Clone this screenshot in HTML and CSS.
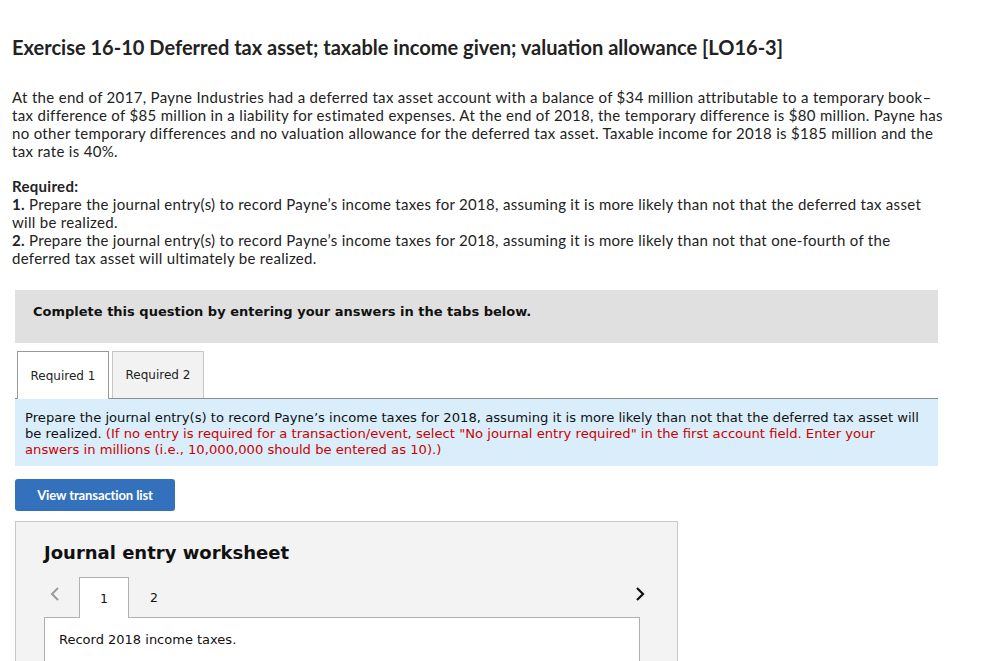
FILE: index.html
```html
<!DOCTYPE html>
<html>
<head>
<meta charset="utf-8">
<link rel="stylesheet" href="styles.css">
</head>
<body>
<div class="page">
  <h1 class="title">Exercise 16-10 Deferred tax asset; taxable income given; valuation allowance [LO16-3]</h1>
  <p class="intro">At the end of 2017, Payne Industries had a deferred tax asset account with a balance of $34 million attributable to a temporary book–<br>tax difference of $85 million in a liability for estimated expenses. At the end of 2018, the temporary difference is $80 million. Payne has no other temporary differences and no valuation allowance for the deferred tax asset. Taxable income for 2018 is $185 million and the tax rate is 40%.</p>
  <div class="required">
    <div class="req-head">Required:</div>
    <div><b>1.</b> Prepare the journal entry(s) to record Payne’s income taxes for 2018, assuming it is more likely than not that the deferred tax asset will be realized.</div>
    <div><b>2.</b> Prepare the journal entry(s) to record Payne’s income taxes for 2018, assuming it is more likely than not that one-fourth of the deferred tax asset will ultimately be realized.</div>
  </div>
  <div class="complete">Complete this question by entering your answers in the tabs below.</div>
  <div class="tabs">
    <div class="tab active">Required 1</div>
    <div class="tab">Required 2</div>
  </div>
  <div class="info">Prepare the journal entry(s) to record Payne’s income taxes for 2018, assuming it is more likely than not that the deferred tax asset will be realized. <span class="red">(If no entry is required for a transaction/event, select "No journal entry required" in the first account field. Enter your answers in millions (i.e., 10,000,000 should be entered as 10).)</span></div>
  <button class="btn">View transaction list</button>
  <div class="worksheet">
    <h2 class="ws-title">Journal entry worksheet</h2>
    <div class="ws-nav">
      <span class="arrow prev"><svg width="10" height="16" viewBox="0 0 10 16"><path d="M8 2 L2 8 L8 14" fill="none" stroke="#9a9a9a" stroke-width="2"/></svg></span>
      <div class="ws-tab active">1</div>
      <div class="ws-tab">2</div>
      <span class="arrow next"><svg width="10" height="16" viewBox="0 0 10 16"><path d="M2 2 L8 8 L2 14" fill="none" stroke="#111" stroke-width="2.2"/></svg></span>
    </div>
    <div class="ws-body">Record 2018 income taxes.</div>
  </div>
</div>
</body>
</html>
```
FILE: styles.css
```css
html, body { margin: 0; padding: 0; background: #fff; }
.page {
  width: 1004px;
  height: 661px;
  overflow: hidden;
  font-family: "Lato", "Open Sans", sans-serif;
  color: #222;
}
.title {
  margin: 0;
  padding: 35px 0 0 12px;
  font-size: 20.05px;
  line-height: 24px;
  font-weight: 700;
  color: #222;
}
.intro {
  margin: 29px 0 0 12px;
  width: 945px;
  font-size: 15px;
  line-height: 18px;
  letter-spacing: 0.32px;
}
.required {
  margin: 17px 0 0 12px;
  width: 913px;
  font-size: 15px;
  line-height: 18px;
  letter-spacing: 0.3px;
}
.req-head { font-weight: 700; }
.complete {
  margin: 23px 0 0 15px;
  width: 923px;
  height: 53px;
  box-sizing: border-box;
  padding: 14px 18px;
  background: #e0e0e0;
  font-family: "DejaVu Sans", Verdana, sans-serif;
  font-size: 13px;
  font-weight: 700;
  color: #111;
}
.tabs {
  margin: 8px 0 0 15px;
  width: 923px;
  display: flex;
  gap: 3px;
  padding-left: 2px;
  box-sizing: border-box;
  border-bottom: 1px solid #8c8c8c;
  height: 48px;
}
.tab {
  width: 92px;
  box-sizing: border-box;
  border: 1px solid #c6c6c6;
  border-bottom: none;
  background: #f2f2f2;
  font-family: "DejaVu Sans", Verdana, sans-serif;
  font-size: 12px;
  color: #222;
  display: flex;
  align-items: center;
  justify-content: center;
}
.tab.active {
  background: #fff;
  border-color: #999;
  margin-bottom: -1px;
}
.info {
  margin: 0 0 0 15px;
  width: 923px;
  box-sizing: border-box;
  padding: 11px 16px 8px 10px;
  background: #d9eefa;
  font-family: "DejaVu Sans", Verdana, sans-serif;
  font-size: 13.15px;
  line-height: 16px;
  color: #111;
}
.red { color: #cc0000; }
.btn {
  display: block;
  margin: 13px 0 0 15px;
  width: 160px;
  height: 32px;
  border: none;
  border-radius: 3px;
  background: #3371bd;
  color: #fff;
  font-family: "Lato", "Liberation Sans", sans-serif;
  font-weight: 700;
  font-size: 13px;
  letter-spacing: -0.1px;
  padding: 0;
}
.worksheet {
  margin: 10px 0 0 15px;
  width: 663px;
  height: 160px;
  box-sizing: border-box;
  border: 1px solid #c8c8c8;
  background: #f3f3f3;
  padding: 0 0 0 28px;
}
.ws-title {
  margin: 0;
  padding-top: 20px;
  font-family: "DejaVu Sans", Verdana, sans-serif;
  font-size: 18px;
  line-height: 22px;
  font-weight: 700;
  color: #111;
}
.ws-nav {
  margin-top: 12px;
  display: flex;
  align-items: flex-end;
  width: 609px;
  height: 41px;
}
.arrow { display: flex; align-items: center; height: 36px; align-self: flex-start; }
.arrow.prev { width: 35px; padding-left: 6px; box-sizing: border-box; }
.arrow.next { margin-left: auto; margin-right: 8px; }
.ws-tab {
  width: 50px;
  height: 41px;
  box-sizing: border-box;
  display: flex;
  align-items: center;
  justify-content: center;
  font-family: "DejaVu Sans", Verdana, sans-serif;
  font-size: 12.5px;
  color: #111;
  margin-bottom: -1px;
  position: relative;
  z-index: 1;
}
.ws-tab.active {
  background: #fff;
  border: 1px solid #b0b0b0;
  border-bottom: none;
}
.ws-body {
  width: 596px;
  height: 60px;
  box-sizing: border-box;
  background: #fff;
  border: 1px solid #b0b0b0;
  border-bottom: none;
  padding: 14px 14px;
  font-family: "DejaVu Sans", Verdana, sans-serif;
  font-size: 13px;
  color: #111;
}
```
